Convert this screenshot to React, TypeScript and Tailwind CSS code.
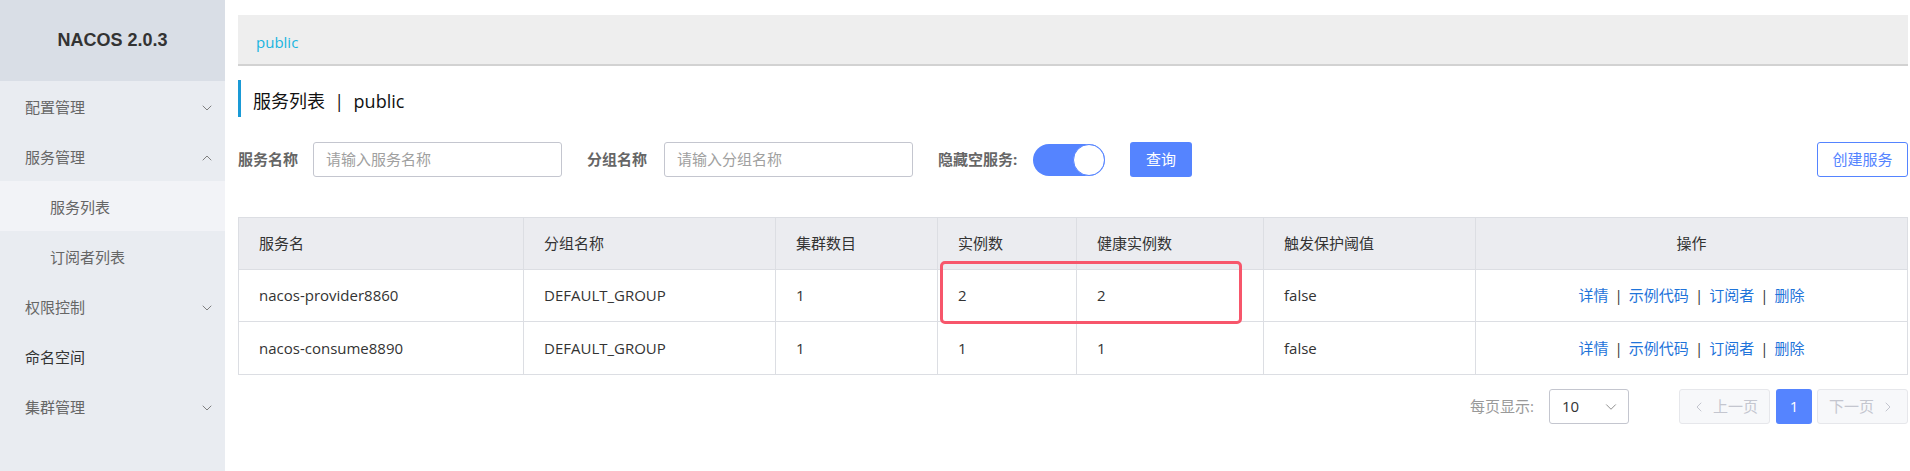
import { ChevronDown, ChevronUp, ChevronLeft, ChevronRight } from "lucide-react";

const menu = [
  { label: "配置管理", icon: "down" },
  { label: "服务管理", icon: "up" },
  { label: "服务列表", sub: true, active: true },
  { label: "订阅者列表", sub: true },
  { label: "权限控制", icon: "down" },
  { label: "命名空间", dark: true },
  { label: "集群管理", icon: "down" },
];

const rows = [
  { name: "nacos-provider8860", group: "DEFAULT_GROUP", clusters: "1", instances: "2", healthy: "2", threshold: "false" },
  { name: "nacos-consume8890", group: "DEFAULT_GROUP", clusters: "1", instances: "1", healthy: "1", threshold: "false" },
];

const headers = ["服务名", "分组名称", "集群数目", "实例数", "健康实例数", "触发保护阈值"];

function Sidebar() {
  return (
    <aside className="w-[225px] shrink-0 bg-[#e9ecf1] h-full">
      {/* Logo */}
      <div className="h-[81px] bg-[#d9dee6] flex items-center justify-center">
        <span className="font-['Liberation_Sans',sans-serif] font-bold text-[18px] text-[#333]">NACOS 2.0.3</span>
      </div>
      {menu.map((item) => (
        <div
          key={item.label}
          className={`h-[50px] flex items-center pr-[10px] text-[15px] pt-[3px] ${item.sub ? "pl-[50px]" : "pl-[25px]"} ${
            item.active ? "bg-[#f2f3f7]" : ""
          } ${item.dark ? "text-[#333]" : "text-[#666]"}`}
        >
          <span className="flex-1">{item.label}</span>
          {item.icon === "down" && <ChevronDown size={16} strokeWidth={1.4} className="text-[#777]" />}
          {item.icon === "up" && <ChevronUp size={16} strokeWidth={1.4} className="text-[#777]" />}
        </div>
      ))}
    </aside>
  );
}

export default function App() {
  return (
    <div className="flex h-[471px] w-[1910px] bg-white text-[#333] font-['Open_Sans','Noto_Sans_CJK_SC',sans-serif] overflow-hidden">
      <Sidebar />

      <main className="flex-1 pl-[13px] pr-[2px] pt-[15px]">
        {/* Namespace bar */}
        <div className="h-[51px] bg-[#eeeeee] border-b-2 border-[#d2d2d2] flex items-center pl-[18px] pt-[5px]">
          <span className="text-[15px] text-[#1ab5e0]">public</span>
        </div>

        {/* Title */}
        <div className="mt-[14px] h-[37px] border-l-[3px] border-[#1a9ad6] flex items-center pl-[12px] pt-[5px]">
          <span className="text-[18px] text-[#111]">服务列表&nbsp;&nbsp;|&nbsp;&nbsp;public</span>
        </div>

        {/* Search row */}
        <div className="mt-[25px] h-[35px] flex items-center">
          <span className="text-[15px] font-bold text-[#666] w-[60px] whitespace-nowrap">服务名称</span>
          <div className="ml-[15px] w-[249px] h-[35px] border border-[#c4c6cf] rounded-[3px] flex items-center px-[12px]">
            <span className="text-[15px] text-[#a0a0a0]">请输入服务名称</span>
          </div>
          <span className="ml-[25px] text-[15px] font-bold text-[#666] w-[60px] whitespace-nowrap">分组名称</span>
          <div className="ml-[17px] w-[249px] h-[35px] border border-[#c4c6cf] rounded-[3px] flex items-center px-[12px]">
            <span className="text-[15px] text-[#a0a0a0]">请输入分组名称</span>
          </div>
          <span className="ml-[25px] text-[15px] font-bold text-[#666] w-[79px] whitespace-nowrap">隐藏空服务:</span>
          <div className="ml-[16px] w-[72px] h-[32px] rounded-full bg-[#5584ff] flex items-center justify-end">
            <div className="w-[32px] h-[32px] rounded-full bg-white border border-[#5584ff]" />
          </div>
          <button className="ml-[25px] w-[62px] h-[35px] rounded-[3px] bg-[#5584ff] text-white text-[15px]">查询</button>
          <button className="ml-auto w-[91px] h-[35px] rounded-[3px] border border-[#5584ff] bg-white text-[#5584ff] text-[15px]">
            创建服务
          </button>
        </div>

        {/* Table */}
        <div className="relative mt-[40px] border border-[#dcdee3] text-[15px]">
          <div className="grid grid-cols-[285px_252px_162px_139px_187px_212px_1fr] bg-[#ebecf0] h-[52px] border-b border-[#dcdee3]">
            {headers.map((h) => (
              <div key={h} className="border-r border-[#dcdee3] flex items-center pl-[20px] text-[#333]">
                {h}
              </div>
            ))}
            <div className="flex items-center justify-center text-[#333]">操作</div>
          </div>
          {rows.map((r, i) => (
            <div
              key={r.name}
              className={`grid grid-cols-[285px_252px_162px_139px_187px_212px_1fr] h-[52px] ${
                i === 0 ? "border-b border-[#dcdee3]" : ""
              }`}
            >
              {[r.name, r.group, r.clusters, r.instances, r.healthy, r.threshold].map((v, j) => (
                <div key={j} className="border-r border-[#dcdee3] flex items-center pl-[20px] text-[#333]">
                  {v}
                </div>
              ))}
              <div className="flex items-center justify-center">
                <span className="text-[#1f74da]">详情</span>
                <span className="mx-[6px] text-[#333]">|</span>
                <span className="text-[#1f74da]">示例代码</span>
                <span className="mx-[6px] text-[#333]">|</span>
                <span className="text-[#1f74da]">订阅者</span>
                <span className="mx-[6px] text-[#333]">|</span>
                <span className="text-[#1f74da]">删除</span>
              </div>
            </div>
          ))}

          {/* Highlight annotation */}
          <div className="absolute left-[701px] top-[43px] w-[302px] h-[63px] border-[3px] border-[#f7566b] rounded-[5px]" />
        </div>

        {/* Pagination */}
        <div className="mt-[14px] flex items-center justify-end">
          <span className="text-[15px] text-[#999]">每页显示:</span>
          <div className="ml-[15px] w-[80px] h-[35px] border border-[#c4c6cf] rounded-[3px] flex items-center justify-between pl-[12px] pr-[8px]">
            <span className="text-[15px] text-[#333]">10</span>
            <ChevronDown size={18} strokeWidth={1.25} className="text-[#888]" />
          </div>
          <div className="ml-[50px] w-[91px] h-[35px] border border-[#e6e7eb] bg-[#f7f8fa] rounded-[3px] flex items-center justify-center gap-[6px] text-[#c4c6cf] text-[15px]">
            <ChevronLeft size={16} strokeWidth={1.5} />
            <span>上一页</span>
          </div>
          <div className="ml-[6px] w-[36px] h-[35px] rounded-[3px] bg-[#5584ff] text-white text-[15px] flex items-center justify-center">
            1
          </div>
          <div className="ml-[5px] w-[91px] h-[35px] border border-[#e6e7eb] bg-[#f7f8fa] rounded-[3px] flex items-center justify-center gap-[6px] text-[#c4c6cf] text-[15px]">
            <span>下一页</span>
            <ChevronRight size={16} strokeWidth={1.5} />
          </div>
        </div>
      </main>
    </div>
  );
}
